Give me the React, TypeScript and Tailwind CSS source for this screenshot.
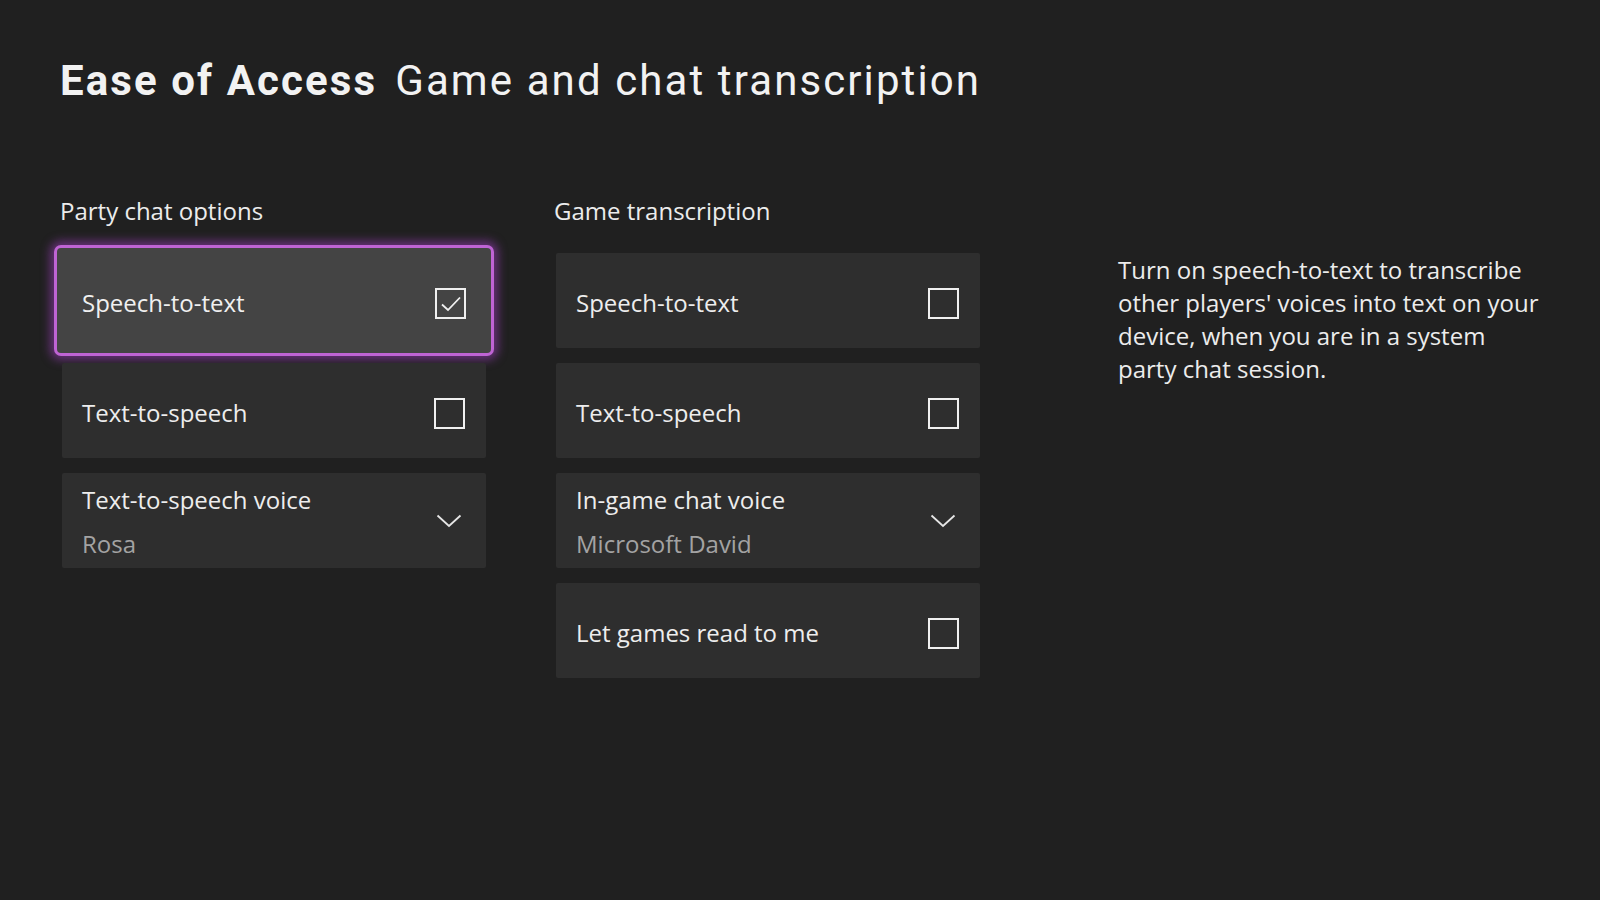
type Row =
  | { kind: "check"; label: string; checked?: boolean; focused?: boolean }
  | { kind: "select"; label: string; value: string };

const party: Row[] = [
  { kind: "check", label: "Speech-to-text", checked: true, focused: true },
  { kind: "check", label: "Text-to-speech" },
  { kind: "select", label: "Text-to-speech voice", value: "Rosa" },
];

const game: Row[] = [
  { kind: "check", label: "Speech-to-text" },
  { kind: "check", label: "Text-to-speech" },
  { kind: "select", label: "In-game chat voice", value: "Microsoft David" },
  { kind: "check", label: "Let games read to me" },
];

const body = { fontFamily: '"Open Sans", "Noto Sans", sans-serif' };

export default function App() {
  return (
    <div className="min-h-screen w-full bg-[#202020] pl-[60px] pt-[60px] text-white" style={body}>
      <h1
        className="flex items-baseline gap-[18px] text-[42px] leading-none tracking-[2.1px] text-[#f2f2f2]"
        style={{ fontFamily: 'Roboto, "Noto Sans", sans-serif' }}
      >
        <span className="font-bold">Ease of Access</span>
        <span className="font-normal">Game and chat transcription</span>
      </h1>

      <div className="mt-[93px] flex">
        <Column title="Party chat options" rows={party} width="w-[426px]" />
        <div className="ml-[68px]">
          <Column title="Game transcription" rows={game} width="w-[426px]" />
        </div>
        <p className="ml-[138px] mt-[58px] w-[425px] text-[24px] leading-[33px] text-[#ececec]">
          Turn on speech-to-text to transcribe other players' voices into text on your device, when you are in a system
          party chat session.
        </p>
      </div>
    </div>
  );
}

function Column({ title, rows, width }: { title: string; rows: Row[]; width: string }) {
  return (
    <section className={width}>
      <h2 className="text-[24px] leading-[32px] text-[#ececec]">{title}</h2>
      <div className="mt-[26px] flex flex-col gap-[15px] pl-[2px]">
        {rows.map((row) => (
          <Card key={row.label} row={row} />
        ))}
      </div>
    </section>
  );
}

function Card({ row }: { row: Row }) {
  if (row.kind === "select") {
    return (
      <div className="flex h-[95px] items-center justify-between rounded-[2px] bg-[#2e2e2e] pl-[20px] pr-[24px]">
        <div className="flex flex-col gap-[12px] pt-[2px]">
          <span className="text-[24px] leading-[32px] text-[#ededed]">{row.label}</span>
          <span className="text-[24px] leading-[32px] text-[#a3a3a3]">{row.value}</span>
        </div>
        <Chevron />
      </div>
    );
  }

  if (row.focused) {
    return (
      <div className="-mx-[8px] -my-[8px] flex h-[111px] items-center justify-between rounded-[7px] border-[3px] border-[#bf64d4] bg-[#444444] pl-[25px] pr-[25px] pt-[4px] shadow-[0_0_10px_4px_rgba(150,60,180,0.6)]">
        <span className="text-[24px] leading-[32px] text-[#f0f0f0]">{row.label}</span>
        <Box checked={row.checked} />
      </div>
    );
  }

  return (
    <div className="flex h-[95px] items-center justify-between rounded-[2px] bg-[#2e2e2e] pl-[20px] pr-[21px] pt-[4px]">
      <span className="text-[24px] leading-[32px] text-[#ededed]">{row.label}</span>
      <Box checked={row.checked} />
    </div>
  );
}

function Chevron() {
  return (
    <svg width="26" height="14" viewBox="0 0 26 14" fill="none" aria-hidden="true">
      <path d="M1.5 1.5 L13 12 L24.5 1.5" stroke="#e6e6e6" strokeWidth="1.8" />
    </svg>
  );
}

function Box({ checked }: { checked?: boolean }) {
  return (
    <div className="mt-[2px] flex h-[31px] w-[31px] items-center justify-center border-[2px] border-[#f0f0f0]">
      {checked && (
        <svg width="22" height="17" viewBox="0 0 22 17" fill="none" aria-hidden="true">
          <path d="M2 9.5 L8 15 L20 2.5" stroke="#f0f0f0" strokeWidth="1.8" />
        </svg>
      )}
    </div>
  );
}
